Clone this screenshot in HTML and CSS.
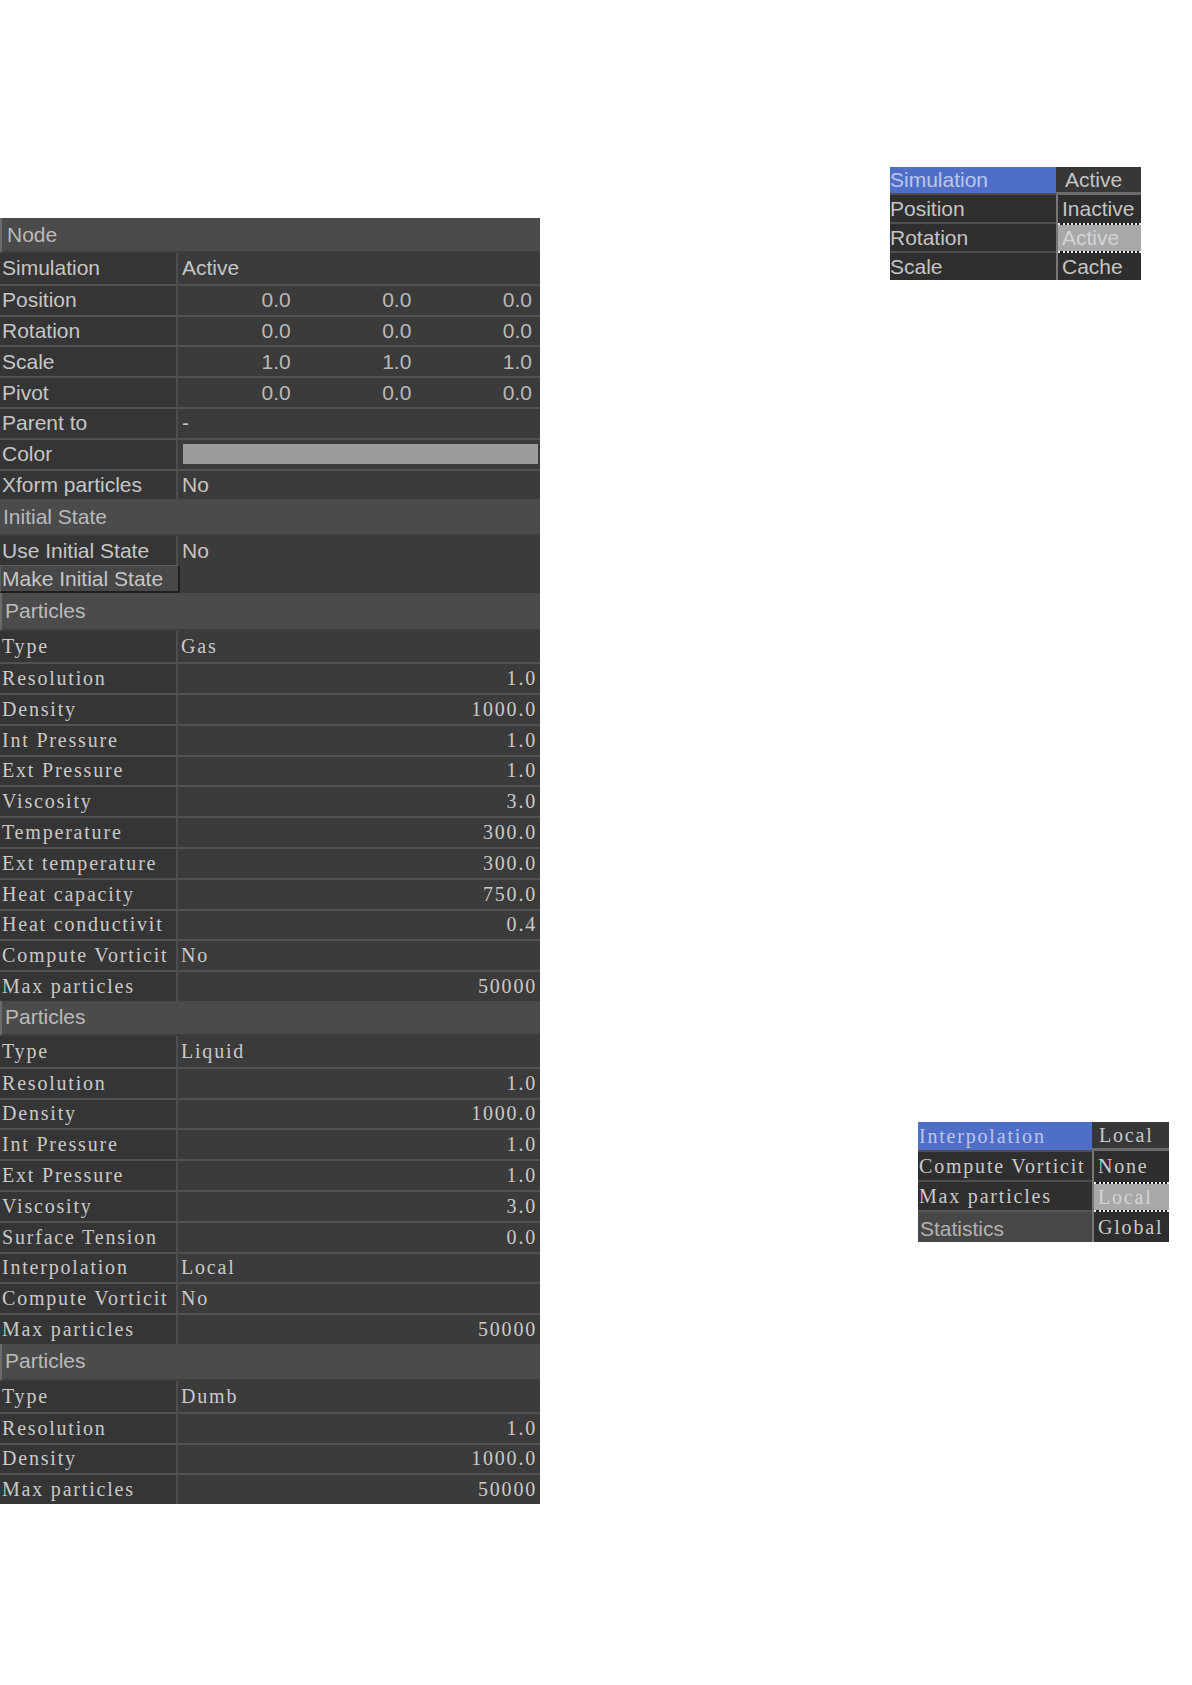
FILE: index.html
```html
<!DOCTYPE html>
<html>
<head>
<meta charset="utf-8">
<link rel="stylesheet" href="styles.css">
</head>
<body>
<div class="page">
  <div class="panel">
    <div class="hdr hdr-edge hdr-node">Node</div>
    <div class="row"><div class="lbl">Simulation</div><div class="val">Active</div></div>
    <div class="row"><div class="lbl">Position</div><div class="val vec"><span>0.0</span><span>0.0</span><span>0.0</span></div></div>
    <div class="row"><div class="lbl">Rotation</div><div class="val vec"><span>0.0</span><span>0.0</span><span>0.0</span></div></div>
    <div class="row"><div class="lbl">Scale</div><div class="val vec"><span>1.0</span><span>1.0</span><span>1.0</span></div></div>
    <div class="row"><div class="lbl">Pivot</div><div class="val vec"><span>0.0</span><span>0.0</span><span>0.0</span></div></div>
    <div class="row"><div class="lbl">Parent to</div><div class="val">-</div></div>
    <div class="row"><div class="lbl">Color</div><div class="val"><div class="swatch"></div></div></div>
    <div class="row"><div class="lbl">Xform particles</div><div class="val">No</div></div>

    <div class="hdr hdr-init">Initial State</div>
    <div class="row row-use"><div class="lbl">Use Initial State</div><div class="val">No</div></div>
    <div class="row row-make"><div class="lbl btn">Make Initial State</div><div class="val"></div></div>

    <div class="hdr hdr-edge hdr-p1">Particles</div>
    <div class="row mono"><div class="lbl">Type</div><div class="val">Gas</div></div>
    <div class="row mono"><div class="lbl">Resolution</div><div class="val num">1.0</div></div>
    <div class="row mono"><div class="lbl">Density</div><div class="val num">1000.0</div></div>
    <div class="row mono"><div class="lbl">Int Pressure</div><div class="val num">1.0</div></div>
    <div class="row mono"><div class="lbl">Ext Pressure</div><div class="val num">1.0</div></div>
    <div class="row mono"><div class="lbl">Viscosity</div><div class="val num">3.0</div></div>
    <div class="row mono"><div class="lbl">Temperature</div><div class="val num">300.0</div></div>
    <div class="row mono"><div class="lbl">Ext temperature</div><div class="val num">300.0</div></div>
    <div class="row mono"><div class="lbl">Heat capacity</div><div class="val num">750.0</div></div>
    <div class="row mono"><div class="lbl">Heat conductivit</div><div class="val num">0.4</div></div>
    <div class="row mono"><div class="lbl">Compute Vorticit</div><div class="val">No</div></div>
    <div class="row mono"><div class="lbl">Max particles</div><div class="val num">50000</div></div>

    <div class="hdr hdr-edge hdr-p2">Particles</div>
    <div class="row mono"><div class="lbl">Type</div><div class="val">Liquid</div></div>
    <div class="row mono"><div class="lbl">Resolution</div><div class="val num">1.0</div></div>
    <div class="row mono"><div class="lbl">Density</div><div class="val num">1000.0</div></div>
    <div class="row mono"><div class="lbl">Int Pressure</div><div class="val num">1.0</div></div>
    <div class="row mono"><div class="lbl">Ext Pressure</div><div class="val num">1.0</div></div>
    <div class="row mono"><div class="lbl">Viscosity</div><div class="val num">3.0</div></div>
    <div class="row mono"><div class="lbl">Surface Tension</div><div class="val num">0.0</div></div>
    <div class="row mono"><div class="lbl">Interpolation</div><div class="val">Local</div></div>
    <div class="row mono"><div class="lbl">Compute Vorticit</div><div class="val">No</div></div>
    <div class="row mono"><div class="lbl">Max particles</div><div class="val num">50000</div></div>

    <div class="hdr hdr-edge hdr-p3">Particles</div>
    <div class="row mono"><div class="lbl">Type</div><div class="val">Dumb</div></div>
    <div class="row mono"><div class="lbl">Resolution</div><div class="val num">1.0</div></div>
    <div class="row mono"><div class="lbl">Density</div><div class="val num">1000.0</div></div>
    <div class="row mono"><div class="lbl">Max particles</div><div class="val num">50000</div></div>
  </div>

  <div class="popup popup-sim">
    <div class="pcol plabels">
      <div class="prow psel p-h26">Simulation</div>
      <div class="prow p-h29">Position</div>
      <div class="prow p-h29">Rotation</div>
      <div class="prow p-h29">Scale</div>
    </div>
    <div class="pcol dd">
      <div class="dd-cur">Active</div>
      <div class="dd-list">
        <div class="dd-item d-h28">Inactive</div>
        <div class="dd-item dd-sel d-h30">Active</div>
        <div class="dd-item d-h27">Cache</div>
      </div>
    </div>
  </div>

  <div class="popup popup-interp">
    <div class="pcol plabels">
      <div class="prow psel pmono p-h28">Interpolation</div>
      <div class="prow pmono p-h30">Compute Vorticit</div>
      <div class="prow pmono p-h30">Max particles</div>
      <div class="prow pstat">Statistics</div>
    </div>
    <div class="pcol dd">
      <div class="dd-cur pmono">Local</div>
      <div class="dd-list pmono">
        <div class="dd-item d-h31">None</div>
        <div class="dd-item dd-sel d-h30">Local</div>
        <div class="dd-item d-h30">Global</div>
      </div>
    </div>
  </div>
</div>
</body>
</html>
```

FILE: styles.css
```css
html, body {
  margin: 0;
  padding: 0;
  background: #ffffff;
}

.page {
  position: relative;
  width: 1192px;
  height: 1685px;
  padding-top: 218px;
  box-sizing: border-box;
  font-family: "Liberation Sans", Arial, sans-serif;
  font-size: 21px;
}

/* ---------- main property panel ---------- */
.panel {
  width: 540px;
  background: #3a3a3a;
  color: #c6c6c6;
}

.hdr {
  display: flex;
  align-items: center;
  box-sizing: border-box;
  padding-left: 4px;
  background: #4b4b4b;
  color: #bababa;
  border-bottom: 2px solid #3d3d3d;
}

.hdr-edge {
  border-left: 2px solid #6a6a6a;
  padding-left: 3px;
}

.hdr-node { height: 35px; padding-left: 5px; }
.hdr-init { height: 37px; padding-left: 3px; }
.hdr-p1 { height: 38px; }
.hdr-p2 { height: 35px; }
.hdr-p3 { height: 37px; }

.row {
  display: flex;
  height: 30.8px;
  box-sizing: border-box;
  border-top: 2px solid #525252;
}

.hdr + .row {
  border-top: none;
}

.row-use { height: 29px; }
.row-make { height: 28px; }

.lbl {
  width: 178px;
  flex: none;
  box-sizing: border-box;
  display: flex;
  align-items: center;
  padding-left: 2px;
  background: #353535;
  border-right: 2px solid #4e4e4e;
  white-space: nowrap;
  overflow: hidden;
}

.val {
  flex: 1;
  min-width: 0;
  display: flex;
  align-items: center;
  padding-left: 4px;
  background: #3b3b3b;
  white-space: nowrap;
}

.vec {
  padding-left: 0;
  color: #b9b9b9;
}

.vec span {
  flex: 1;
  text-align: right;
  padding-right: 8px;
}

.num {
  justify-content: flex-end;
  padding-right: 5px;
}

.swatch {
  flex: 1;
  height: 20px;
  margin-left: 1px;
  margin-right: 2px;
  background: #9c9c9c;
}

.btn {
  width: 180px;
  background: #474747;
  border-top: 1px solid #5e5e5e;
  border-left: 1px solid #5e5e5e;
  border-right: 2px solid #1f1f1f;
  border-bottom: 2px solid #1f1f1f;
  padding-left: 1px;
}

.row-make {
  border-top: none;
}

/* bitmap-style serif text used by the particle rows */
.mono .lbl,
.mono .val,
.pmono {
  font-family: "Liberation Serif", "Times New Roman", serif;
  font-size: 20px;
  letter-spacing: 1.8px;
  color: #cacaca;
}

.mono .val {
  padding-left: 3px;
}

.mono .num {
  padding-right: 3px;
}

/* ---------- popups ---------- */
.popup {
  position: absolute;
  display: flex;
  background: #2e2e2e;
  color: #c4c4c4;
}

.popup-sim {
  left: 890px;
  top: 167px;
}

.popup-interp {
  left: 918px;
  top: 1122px;
}

.pcol {
  display: flex;
  flex-direction: column;
}

.popup-sim .plabels { width: 166px; }
.popup-interp .plabels { width: 174px; }
.popup-sim .dd { width: 85px; }
.popup-interp .dd { width: 77px; }

.prow {
  display: flex;
  align-items: center;
  box-sizing: border-box;
  background: #2f2f2f;
  border-top: 2px solid #4f4f4f;
  white-space: nowrap;
  overflow: hidden;
}

.psel {
  background: #4f6ec7;
  color: #bcc6ea;
  border-top: none;
}

.popup-interp .prow {
  padding-left: 1px;
}

.p-h26 { height: 26px; }
.p-h28 { height: 28px; }
.p-h29 { height: 29px; }
.p-h30 { height: 30px; }

.pstat {
  height: 32px;
  background: #474747;
  color: #b2b2b2;
  border-top: 2px solid #555555;
  padding-left: 2px;
}

.popup-interp .pstat {
  padding-left: 2px;
  padding-top: 4px;
}

.dd-cur {
  display: flex;
  align-items: center;
  box-sizing: border-box;
  height: 28px;
  padding-left: 9px;
  background: #373737;
  border-bottom: 3px solid #6b6b6b;
}

.popup-interp .dd-cur {
  height: 29px;
  padding-left: 7px;
}

.dd-list {
  flex: 1;
  display: flex;
  flex-direction: column;
  background: #1c1c1c;
  border-left: 2px solid #777777;
}

.dd-item {
  display: flex;
  align-items: center;
  box-sizing: border-box;
  padding-left: 4px;
  background: #2e2e2e;
  white-space: nowrap;
  overflow: hidden;
}

.dd-sel {
  background: #a8a8a8;
  background-clip: padding-box;
  color: #d4d4d4;
  border-top: 2px dotted #e8e8e8;
  border-bottom: 2px dotted #e8e8e8;
}

.d-h26 { height: 26px; }
.d-h27 { height: 27px; }
.d-h28 { height: 28px; }
.d-h30 { height: 30px; }
.d-h31 { height: 31px; }
```
